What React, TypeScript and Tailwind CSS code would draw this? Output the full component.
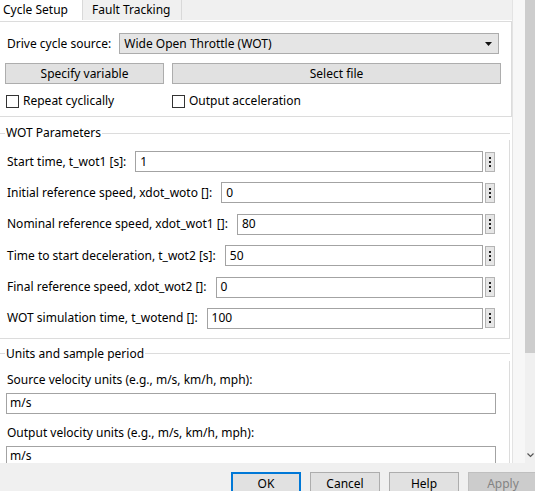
import React from 'react';

const params = [
  { label: 'Start time, t_wot1 [s]:', value: '1' },
  { label: 'Initial reference speed, xdot_woto []:', value: '0' },
  { label: 'Nominal reference speed, xdot_wot1 []:', value: '80' },
  { label: 'Time to start deceleration, t_wot2 [s]:', value: '50' },
  { label: 'Final reference speed, xdot_wot2 []:', value: '0' },
  { label: 'WOT simulation time, t_wotend []:', value: '100' },
];

function EllipsisButton() {
  return (
    <div className="ml-[2px] flex h-[20px] w-[10px] shrink-0 flex-col items-center justify-center gap-[2px] border border-[#b4b4b4] bg-[#e6e6e6]">
      <div className="h-[2px] w-[2px] bg-[#222]" />
      <div className="h-[2px] w-[2px] bg-[#222]" />
      <div className="h-[2px] w-[2px] bg-[#222]" />
    </div>
  );
}

function ParamRow({ label, value }: { label: string; value: string }) {
  return (
    <div className="flex h-[21px] shrink-0 items-center">
      <span className="whitespace-nowrap">{label}</span>
      <div className="ml-[9px] flex h-[21px] flex-1 items-center border border-[#a3a3a3] bg-white px-[4px]">
        {value}
      </div>
      <EllipsisButton />
    </div>
  );
}

function GroupTitle({ title }: { title: string }) {
  return (
    <div className="flex h-[14px] items-center">
      <div className="h-px w-[5px] bg-[#dcdcdc]" />
      <span className="px-[1px] whitespace-nowrap">{title}</span>
      <div className="h-px flex-1 bg-[#dcdcdc]" />
    </div>
  );
}

function Checkbox({ label }: { label: string }) {
  return (
    <div className="flex items-center gap-[4px]">
      <div className="h-[13px] w-[13px] border border-[#333] bg-white" />
      <span>{label}</span>
    </div>
  );
}

function DialogButton({ label, primary, disabled }: { label: string; primary?: boolean; disabled?: boolean }) {
  if (disabled) {
    return (
      <div className="flex h-[23px] w-[70px] shrink-0 items-center justify-center border border-[#bfbfbf] bg-[#cccccc] text-[#838383]">
        {label}
      </div>
    );
  }
  return (
    <div
      className={
        primary
          ? 'flex h-[23px] w-[70px] shrink-0 items-center justify-center border-2 border-[#0078d7] bg-[#e1e1e1]'
          : 'flex h-[23px] w-[70px] shrink-0 items-center justify-center border border-[#adadad] bg-[#e1e1e1]'
      }
    >
      {label}
    </div>
  );
}

export default function App() {
  return (
    <div className="flex h-[491px] w-[535px] flex-col overflow-hidden bg-[#f0f0f0] font-['Noto_Sans','Open_Sans',sans-serif] text-[12px] leading-[14px] text-black">
      <div className="flex h-[463px] shrink-0 overflow-hidden">
        {/* main pane */}
        <div className="flex w-[512px] flex-col">
          <div className="flex h-[20px] shrink-0 bg-[#f0f0f0]">
            <div className="flex w-[82px] items-center bg-white pl-[3px]">Cycle Setup</div>
            <div className="flex w-[100px] items-center border-r border-l border-[#d9d9d9] pl-[9px]">Fault Tracking</div>
          </div>

          <div className="flex flex-1 flex-col bg-white">
            {/* source box */}
            <div className="mt-px shrink-0 border-t border-r border-b border-[#dcdcdc] pt-[11px] pr-[12px] pb-[7px] pl-[5px]">
              <div className="flex h-[21px] items-center">
                <span className="pl-[2px] whitespace-nowrap">Drive cycle source:</span>
                <div className="ml-[8px] flex h-[21px] flex-1 items-center justify-between border border-[#acacac] bg-[#e5e5e5] pr-[6px] pl-[4px]">
                  <span>Wide Open Throttle (WOT)</span>
                  <svg width="7" height="4" viewBox="0 0 7 4">
                    <path d="M0 0 L7 0 L3.5 4 Z" fill="#111" />
                  </svg>
                </div>
              </div>
              <div className="mt-[9px] flex h-[21px] gap-[8px]">
                <div className="flex w-[159px] items-center justify-center border border-[#adadad] bg-[#e1e1e1]">
                  Specify variable
                </div>
                <div className="-mr-[2px] flex flex-1 items-center justify-center border border-[#adadad] bg-[#e1e1e1]">
                  Select file
                </div>
              </div>
              <div className="mt-[9px] flex h-[16px] items-center pl-[1px]">
                <div className="w-[166px]">
                  <Checkbox label="Repeat cyclically" />
                </div>
                <Checkbox label="Output acceleration" />
              </div>
            </div>

            {/* WOT parameters */}
            <div className="mt-[9px] shrink-0 pr-[2px]">
              <GroupTitle title="WOT Parameters" />
            </div>
            <div className="mr-[2px] flex shrink-0 flex-col gap-[10.4px] border-r border-b border-[#dcdcdc] pt-[11px] pr-[14px] pb-[9px] pl-[7px]">
              {params.map((p) => (
                <ParamRow key={p.label} label={p.label} value={p.value} />
              ))}
            </div>

            {/* units */}
            <div className="mt-[8px] shrink-0 pr-[2px]">
              <GroupTitle title="Units and sample period" />
            </div>
            <div className="mr-[2px] flex shrink-0 flex-col border-r border-[#dcdcdc] pt-[12px] pr-[13px] pl-[6px]">
              <div className="pl-px">Source velocity units (e.g., m/s, km/h, mph):</div>
              <div className="mt-[6px] flex h-[21px] shrink-0 items-center border border-[#a3a3a3] bg-white px-[3px]">m/s</div>
              <div className="mt-[12px] pl-px">Output velocity units (e.g., m/s, km/h, mph):</div>
              <div className="mt-[6px] flex h-[21px] shrink-0 items-center border border-[#a3a3a3] bg-white px-[3px]">m/s</div>
            </div>
          </div>
        </div>

        {/* scrollbar */}
        <div className="flex flex-1 border-l border-[#e3e3e3] bg-[#f7f7f7] pl-[12px]">
          <div className="flex flex-1 flex-col bg-[#f0f0f0]">
            <div className="h-[353px] shrink-0 bg-[#cdcdcd]" />
            <div className="flex flex-1 items-end justify-center pb-[5px]">
              <svg width="7" height="5" viewBox="0 0 7 5">
                <path d="M0.5 0.5 L3.5 3.5 L6.5 0.5" stroke="#555" strokeWidth="1.2" fill="none" />
              </svg>
            </div>
          </div>
        </div>
      </div>

      {/* bottom buttons */}
      <div className="flex h-[28px] shrink-0 gap-[9px] bg-[#f0f0f0] pt-[9px] pl-[231px]">
        <DialogButton label="OK" primary />
        <DialogButton label="Cancel" />
        <DialogButton label="Help" />
        <DialogButton label="Apply" disabled />
      </div>
    </div>
  );
}
